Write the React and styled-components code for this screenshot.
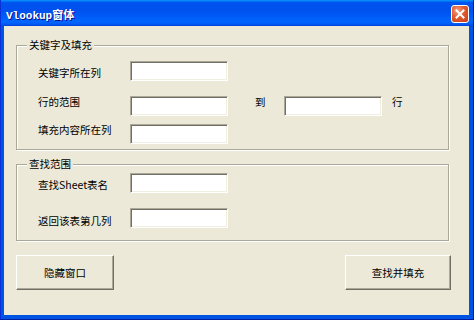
import React from 'react';
import styled, { createGlobalStyle } from 'styled-components';

const GlobalStyle = createGlobalStyle`
  html, body {
    margin: 0;
    padding: 0;
    background: #ffffff;
  }
  body {
    font-family: "Noto Sans CJK SC", "Noto Sans", sans-serif;
  }
`

const Window = styled.div`
  width: 474px;
  height: 320px;
  box-sizing: border-box;
  display: flex;
  flex-direction: column;
  background: #0054e3;
  border-left: 1px solid #0831d9;
  border-right: 1px solid #001ea0;
  border-bottom: 1px solid #001ea0;
`

const TitleBar = styled.div`
  height: 26px;
  flex: none;
  display: flex;
  align-items: center;
  justify-content: space-between;
  padding: 1px 4px 0 5px;
  box-sizing: border-box;
  background: linear-gradient(180deg, #0997ff 0%, #0053ee 10%, #0050ee 40%, #0066ff 85%, #0058f0 94%, #003dd7 100%);
`

const Title = styled.span`
  color: #ffffff;
  font-family: "Liberation Mono", "Noto Sans CJK SC", monospace;
  font-size: 11px;
  font-weight: bold;
  letter-spacing: 0px;
  text-shadow: 1px 1px 0 #0f1089;
`

const CloseButton = styled.div`
  width: 18px;
  height: 18px;
  box-sizing: border-box;
  border: 1px solid #ffffff;
  border-radius: 3px;
  background: radial-gradient(circle at 35% 30%, #f1a184 0%, #e2592f 45%, #c83c16 100%);
  display: flex;
  align-items: center;
  justify-content: center;
`

const Client = styled.div`
  flex: 1;
  margin: 0 4px 4px 3px;
  background: #ece9d8;
  padding: 19px 0 0 12px;
  display: flex;
  flex-direction: column;
  align-items: flex-start;
`

const GroupBox = styled.div`
  position: relative;
  width: 433px;
  height: ${p => p.h}px;
  margin-top: ${p => p.mt || 0}px;
  box-sizing: border-box;
  border: 1px solid #aca899;
  box-shadow: inset 1px 1px 0 #ffffff, 1px 1px 0 #ffffff;
  padding: ${p => p.pt}px 0 0 21px;
  display: flex;
  flex-direction: column;
`

const Legend = styled.span`
  position: absolute;
  top: -8px;
  left: 10px;
  padding: 0 2px;
  background: #ece9d8;
  font-size: 10.5px;
  line-height: 14px;
  color: #000000;
`

const Row = styled.div`
  display: flex;
  align-items: flex-start;
  margin-top: ${p => p.mt || 0}px;
`

const Label = styled.span`
  width: ${p => p.w || 92}px;
  margin-top: ${p => p.dy || 0}px;
  margin-left: ${p => p.ml || 0}px;
  flex: none;
  font-size: 10.5px;
  line-height: 14px;
  color: #000000;
  white-space: nowrap;
`

const TextBox = styled.div`
  width: 98px;
  height: 20px;
  flex: none;
  box-sizing: border-box;
  background: #ffffff;
  border-top: 1px solid #aca899;
  border-left: 1px solid #aca899;
  border-right: 1px solid #ffffff;
  border-bottom: 1px solid #ffffff;
  box-shadow: inset 1px 1px 0 #716f64, inset -1px -1px 0 #f1efe2;
`

const ButtonRow = styled.div`
  width: 435px;
  margin-top: 14px;
  display: flex;
  justify-content: space-between;
`

const Button = styled.div`
  width: ${p => p.w}px;
  height: 35px;
  box-sizing: border-box;
  display: flex;
  align-items: center;
  justify-content: center;
  border-top: 1px solid #ffffff;
  border-left: 1px solid #ffffff;
  border-right: 1px solid #716f64;
  border-bottom: 1px solid #716f64;
  box-shadow: inset -1px -1px 0 #aca899;
  background: #ece9d8;
  font-size: 10.5px;
  color: #000000;
`

export default function App() {
  return (
    <>
      <GlobalStyle />
      <Window>
        <TitleBar>
          <Title>Vlookup窗体</Title>
          <CloseButton>
            <svg width="10" height="10" viewBox="0 0 10 10">
              <path d="M1.5 1.5 L8.5 8.5 M8.5 1.5 L1.5 8.5" stroke="#ffffff" strokeWidth="2" strokeLinecap="square" />
            </svg>
          </CloseButton>
        </TitleBar>
        <Client>
          <GroupBox h={105} pt={15}>
            <Legend>关键字及填充</Legend>
            <Row>
              <Label dy={5}>关键字所在列</Label>
              <TextBox />
            </Row>
            <Row mt={15}>
              <Label dy={-1}>行的范围</Label>
              <TextBox />
              <Label dy={-1} ml={27} w={29}>到</Label>
              <TextBox />
              <Label dy={-1} ml={10} w={14}>行</Label>
            </Row>
            <Row mt={8}>
              <Label dy={-1}>填充内容所在列</Label>
              <TextBox />
            </Row>
          </GroupBox>
          <GroupBox h={77} pt={8} mt={14}>
            <Legend>查找范围</Legend>
            <Row>
              <Label dy={5}>查找Sheet表名</Label>
              <TextBox />
            </Row>
            <Row mt={15}>
              <Label dy={6}>返回该表第几列</Label>
              <TextBox />
            </Row>
          </GroupBox>
          <ButtonRow>
            <Button w={98}>隐藏窗口</Button>
            <Button w={106}>查找并填充</Button>
          </ButtonRow>
        </Client>
      </Window>
    </>
  );
}
